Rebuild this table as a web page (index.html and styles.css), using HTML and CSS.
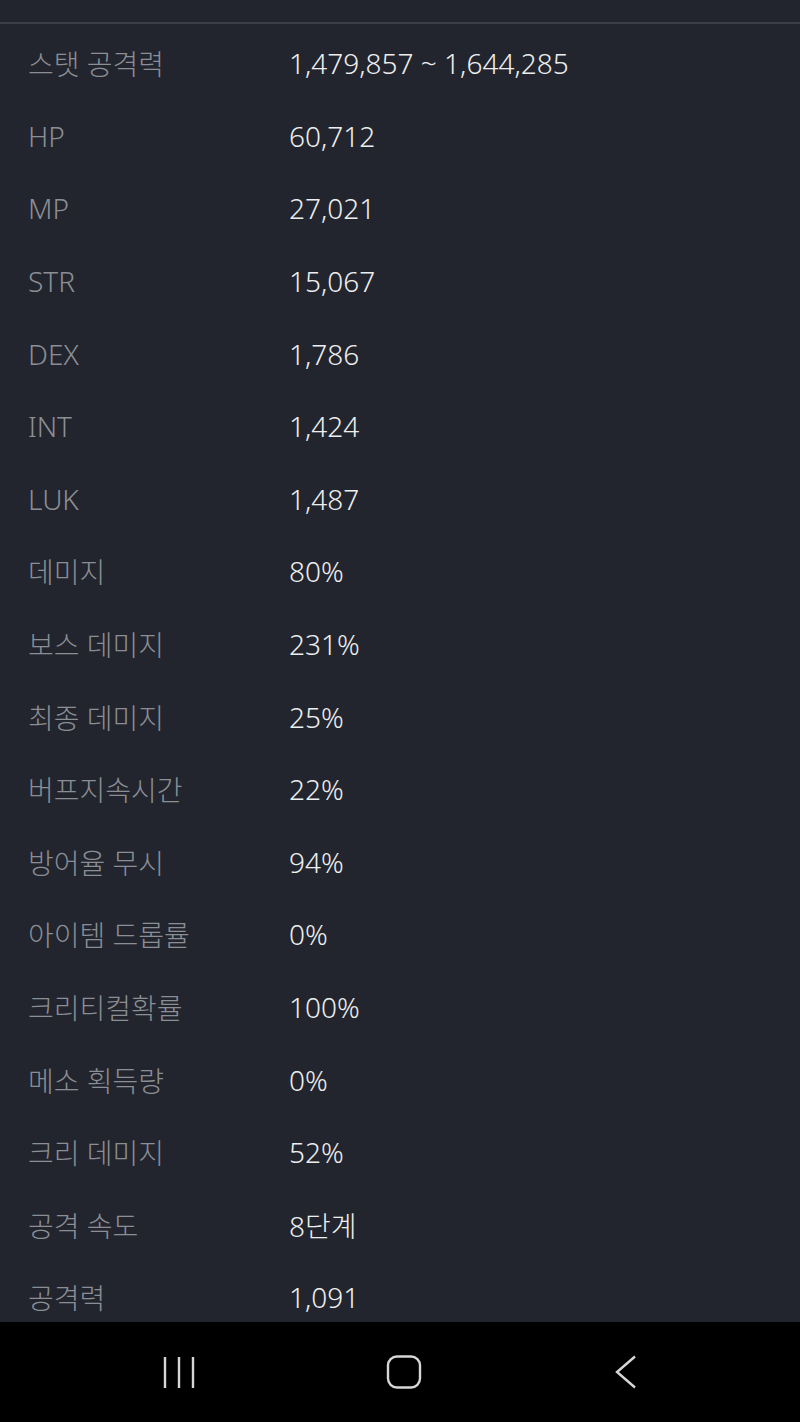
FILE: index.html
```html
<!DOCTYPE html>
<html lang="ko">
<head>
    <meta charset="UTF-8">
    <meta name="viewport" content="width=device-width, initial-scale=1.0">
    <title>스탯</title>
    <link rel="stylesheet" href="styles.css">
</head>
<body>
    <div class="screen">
        <div class="top-strip"></div>

        <!-- Stat list -->
        <section class="stats">
            <div class="stat-row"><span class="stat-label">스탯 공격력</span><span class="stat-value">1,479,857 ~ 1,644,285</span></div>
            <div class="stat-row"><span class="stat-label">HP</span><span class="stat-value">60,712</span></div>
            <div class="stat-row"><span class="stat-label">MP</span><span class="stat-value">27,021</span></div>
            <div class="stat-row"><span class="stat-label">STR</span><span class="stat-value">15,067</span></div>
            <div class="stat-row"><span class="stat-label">DEX</span><span class="stat-value">1,786</span></div>
            <div class="stat-row"><span class="stat-label">INT</span><span class="stat-value">1,424</span></div>
            <div class="stat-row"><span class="stat-label">LUK</span><span class="stat-value">1,487</span></div>
            <div class="stat-row"><span class="stat-label">데미지</span><span class="stat-value">80%</span></div>
            <div class="stat-row"><span class="stat-label">보스 데미지</span><span class="stat-value">231%</span></div>
            <div class="stat-row"><span class="stat-label">최종 데미지</span><span class="stat-value">25%</span></div>
            <div class="stat-row"><span class="stat-label">버프지속시간</span><span class="stat-value">22%</span></div>
            <div class="stat-row"><span class="stat-label">방어율 무시</span><span class="stat-value">94%</span></div>
            <div class="stat-row"><span class="stat-label">아이템 드롭률</span><span class="stat-value">0%</span></div>
            <div class="stat-row"><span class="stat-label">크리티컬확률</span><span class="stat-value">100%</span></div>
            <div class="stat-row"><span class="stat-label">메소 획득량</span><span class="stat-value">0%</span></div>
            <div class="stat-row"><span class="stat-label">크리 데미지</span><span class="stat-value">52%</span></div>
            <div class="stat-row"><span class="stat-label">공격 속도</span><span class="stat-value">8단계</span></div>
            <div class="stat-row"><span class="stat-label">공격력</span><span class="stat-value">1,091</span></div>
        </section>

        <!-- Android navigation bar -->
        <nav class="navbar">
            <svg class="nav-icon" width="34" height="34" viewBox="0 0 34 34">
                <path d="M2 2v31M16 2v31M30 2v31" stroke="#d6d6d6" stroke-width="2.4" fill="none"/>
            </svg>
            <svg class="nav-icon home" width="36" height="34" viewBox="0 0 36 34">
                <rect x="2" y="1.5" width="32" height="31" rx="9" stroke="#d6d6d6" stroke-width="2.4" fill="none"/>
            </svg>
            <svg class="nav-icon" width="34" height="34" viewBox="0 0 34 34">
                <path d="M32 1.5L14 17l18 15.5" stroke="#d6d6d6" stroke-width="2.4" fill="none"/>
            </svg>
        </nav>
    </div>
</body>
</html>
```

FILE: styles.css
```css
body {
    margin: 0;
    background-color: #22252d;
    font-family: "Noto Sans", "Noto Sans CJK KR", sans-serif;
    font-weight: 300;
}
.screen {
    display: flex;
    flex-direction: column;
    height: 1422px;
    overflow: hidden;
}
.top-strip {
    height: 22px;
    border-bottom: 2px solid #3c3f48;
    flex-shrink: 0;
}
.stats {
    flex: 1;
    overflow: hidden;
    padding-top: 3px;
}
.stat-row {
    display: flex;
    align-items: center;
    height: 72.6px;
    padding-left: 28px;
    font-size: 28px;
}
.stat-label {
    width: 261px;
    flex-shrink: 0;
    color: #8b8e95;
}
.stat-value {
    color: #eeeeee;
}
.navbar {
    height: 100px;
    flex-shrink: 0;
    background-color: #000;
    display: flex;
    align-items: center;
    padding: 0 162px 0 163px;
    gap: 189px;
}
.nav-icon {
    display: block;
}
.nav-icon.home {
    margin-right: -8px;
}
```
